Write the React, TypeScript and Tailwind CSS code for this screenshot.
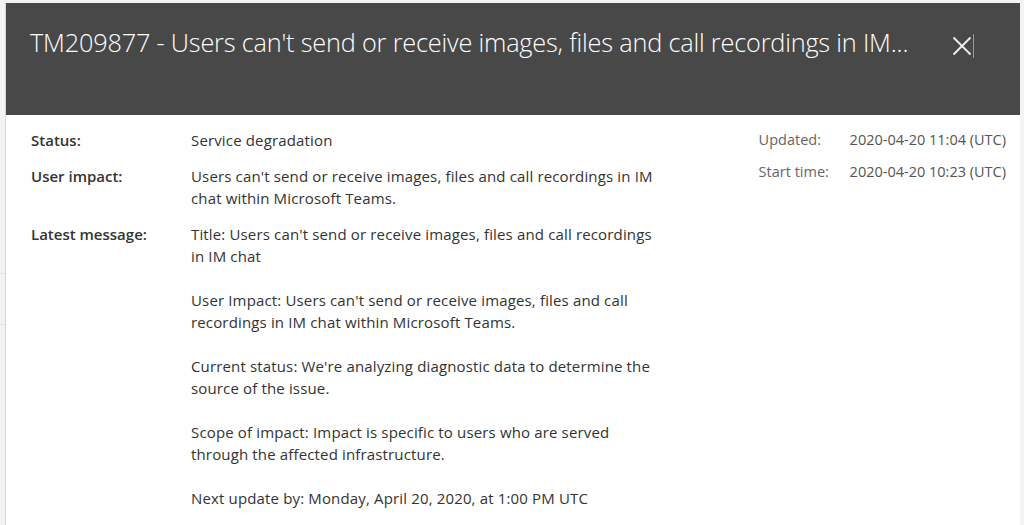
import React from "react";

interface Field {
  label: string;
  value: React.ReactNode;
}

const messageParts = [
  "Title: Users can't send or receive images, files and call recordings in IM chat",
  "User Impact: Users can't send or receive images, files and call recordings in IM chat within Microsoft Teams.",
  "Current status: We're analyzing diagnostic data to determine the source of the issue.",
  "Scope of impact: Impact is specific to users who are served through the affected infrastructure.",
  "Next update by: Monday, April 20, 2020, at 1:00 PM UTC",
];

const fields: Field[] = [
  { label: "Status:", value: "Service degradation" },
  {
    label: "User impact:",
    value:
      "Users can't send or receive images, files and call recordings in IM chat within Microsoft Teams.",
  },
  {
    label: "Latest message:",
    value: (
      <div className="flex flex-col gap-[22px]">
        {messageParts.map((part) => (
          <p key={part}>{part}</p>
        ))}
      </div>
    ),
  },
];

const times = [
  { label: "Updated:", value: "2020-04-20 11:04 (UTC)" },
  { label: "Start time:", value: "2020-04-20 10:23 (UTC)" },
];

export default function App() {
  return (
    <div
      className="w-[1024px] h-[525px] overflow-hidden bg-[#f3f3f3] flex pt-[3px] pr-[4px]"
      style={{ fontFamily: "'Open Sans', 'Noto Sans', sans-serif" }}
    >
      {/* page behind the panel */}
      <div className="w-[5px] flex-shrink-0 flex flex-col">
        <div className="h-[270px]" />
        <div className="h-px bg-[#e2e2e2]" />
        <div className="h-[50px]" />
        <div className="h-px bg-[#e2e2e2]" />
      </div>

      <div className="flex-1 flex flex-col bg-white border-l border-[#d6d6d6]">
        <div className="h-[112px] flex-shrink-0 bg-[#484848] flex items-start pl-[24px] pr-[46px] pt-[21px]">
          <h1 className="flex-1 text-white text-[25.3px] font-light leading-[36px] whitespace-nowrap tracking-[-0.2px]">
            TM209877 - Users can't send or receive images, files and call recordings in IM...
          </h1>
          <div className="flex items-center mt-[10px] gap-[1px]">
            <svg width="20" height="20" viewBox="0 0 20 20" className="text-[#f2f2f2]">
              <path d="M1.5 1.5L18.5 18.5M18.5 1.5L1.5 18.5" stroke="currentColor" strokeWidth="1.8" fill="none" />
            </svg>
            <span className="w-px h-[24px] bg-[#9a9a9a]" />
          </div>
        </div>

        <div className="flex pl-[25px] pr-[14px] pt-[14px] text-[15px] leading-[22px] tracking-[0.15px] text-[#333]">
          <div className="grid grid-cols-[160px_470px] gap-y-[14px]">
            {fields.map((f) => (
              <React.Fragment key={f.label}>
                <div className="font-semibold text-[#333] tracking-normal">{f.label}</div>
                <div>{f.value}</div>
              </React.Fragment>
            ))}
          </div>

          <div className="ml-auto grid grid-cols-[91px_auto] gap-y-[10px] content-start text-[14.5px] tracking-normal text-[#555]">
            {times.map((t) => (
              <React.Fragment key={t.label}>
                <div className="text-[#666]">{t.label}</div>
                <div>{t.value}</div>
              </React.Fragment>
            ))}
          </div>
        </div>
      </div>
    </div>
  );
}
